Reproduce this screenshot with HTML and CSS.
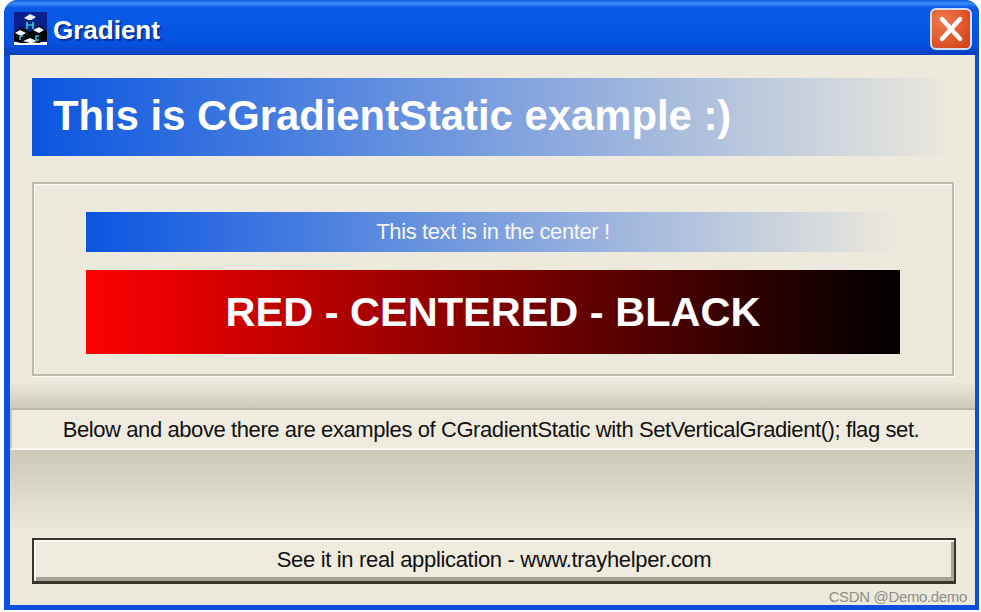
FILE: index.html
```html
<!DOCTYPE html>
<html lang="en">
<head>
<meta charset="utf-8">
<title>Gradient</title>
<link rel="stylesheet" href="styles.css">
</head>
<body>
<div class="window">
  <header class="titlebar">
    <svg class="app-icon" width="33" height="33" viewBox="0 0 33 33" aria-hidden="true">
      <rect width="33" height="33" fill="#0a1f8c"/>
      <rect x="0" y="30" width="33" height="3" fill="#fff"/>
      <path d="M10 6l6-4 6 3-6 4z" fill="#e8eefc"/>
      <path d="M11 8h10v11H11z" fill="#062a80"/>
      <path d="M0 21l7-6 9 5v11H6l-6-2z" fill="#06060a"/>
      <path d="M16 20l9-7 8 6v9l-8 3-9-1z" fill="#06060a"/>
      <path d="M1 21l5-3 6 3-5 3z" fill="#f4f7ff"/>
      <path d="M19 18l6-3 5 3-5 3z" fill="#f4f7ff"/>
      <path d="M9 29l7-3 7 3-7 2z" fill="#f4f7ff"/>
      <path d="M13 10v7M19 10v7M13 13h6" stroke="#38c8e8" stroke-width="1.6" fill="none"/>
      <path d="M6 24v4M6 24h3M25 24h-3v4h3" stroke="#38c8e8" stroke-width="1.4" fill="none"/>
    </svg>
    <span class="title">Gradient</span>
    <button class="close" type="button" aria-label="Close">
      <svg width="30" height="30" viewBox="0 0 30 30" aria-hidden="true"><path d="M6 5l18 20M24 5L6 25" stroke="#fff" stroke-width="4.4" stroke-linecap="round"/></svg>
    </button>
  </header>
  <main class="client">
    <div class="top-area">
      <div class="banner">This is CGradientStatic example :)</div>
      <section class="group">
        <div class="center-bar">This text is in the center !</div>
        <div class="red-bar">RED - CENTERED - BLACK</div>
      </section>
    </div>
    <div class="fade-down"></div>
    <div class="note">Below and above there are examples of CGradientStatic with SetVerticalGradient(); flag set.</div>
    <div class="fade-up"></div>
    <div class="bottom-area">
      <button class="link-button" type="button">See it in real application - www.trayhelper.com</button>
    </div>
  </main>
</div>
<div class="watermark">CSDN @Demo.demo</div>
</body>
</html>
```
FILE: styles.css
```css
html, body {
  margin: 0;
  padding: 0;
  width: 981px;
  height: 612px;
  overflow: hidden;
  background: #fff;
  font-family: "Liberation Sans", Arial, sans-serif;
}
.window {
  width: 975px;
  height: 610px;
  margin-left: 4px;
  box-sizing: border-box;
  border-radius: 14px 14px 0 0;
  background: #0a50e0;
  padding: 0 4px 5px 6px;
  display: flex;
  flex-direction: column;
}
.titlebar {
  height: 55px;
  flex: none;
  margin: 0 -4px 0 -6px;
  padding: 0 7px 0 10px;
  box-sizing: border-box;
  border-radius: 14px 14px 0 0;
  display: flex;
  align-items: center;
  background: linear-gradient(180deg, #0a5ce8 0%, #3d8cf5 6%, #0a5ae6 14%, #0557e6 45%, #0552e0 80%, #0a45c8 95%, #0a3fb8 100%);
}
.app-icon {
  flex: none;
  margin-top: 1px;
}
.title {
  margin-left: 6px;
  margin-top: 5px;
  font-size: 26px;
  font-weight: bold;
  color: #fff;
  text-shadow: 2px 2px 1px #0a2f9c;
}
.close {
  margin-left: auto;
  margin-top: 3px;
  width: 42px;
  height: 42px;
  padding: 0;
  border: 2px solid #d3dcf0;
  border-radius: 6px;
  background: radial-gradient(circle at 30% 30%, #ee7a50, #e2582c 55%, #c93c14 100%);
  display: flex;
  align-items: center;
  justify-content: center;
}
.client {
  flex: 1;
  min-height: 0;
  display: flex;
  flex-direction: column;
  background: #ede9dc;
}
.top-area {
  flex: none;
  height: 326px;
  padding: 23px 0 0 22px;
  box-sizing: border-box;
}
.banner {
  width: 922px;
  height: 78px;
  box-sizing: border-box;
  padding: 0 0 2px 21px;
  display: flex;
  align-items: center;
  font-size: 41.8px;
  font-weight: bold;
  color: #fff;
  background: linear-gradient(90deg, #0a55e0 0%, #ede9dc 100%);
}
.group {
  width: 922px;
  height: 194px;
  margin-top: 26px;
  box-sizing: border-box;
  border: 2px solid #bdbcab;
  box-shadow: inset 1px 1px 0 #fbfaf5, 1px 1px 0 #fbfaf5;
  padding: 28px 52px 0;
  display: flex;
  flex-direction: column;
  gap: 18px;
}
.center-bar {
  height: 40px;
  display: flex;
  align-items: center;
  justify-content: center;
  font-size: 22px;
  letter-spacing: -0.4px;
  color: #f6f6f6;
  background: linear-gradient(90deg, #0a55e0 0%, #ede9dc 100%);
}
.red-bar {
  height: 84px;
  display: flex;
  align-items: center;
  justify-content: center;
  font-size: 41.5px;
  font-weight: bold;
  color: #fff;
  padding-bottom: 1px;
  box-sizing: border-box;
  background: linear-gradient(90deg, #ff0000 0%, #000 100%);
}
.fade-down {
  flex: none;
  height: 27px;
  background: linear-gradient(180deg, #ede9dc 0%, #ccc8ba 100%);
}
.note {
  flex: none;
  height: 42px;
  box-sizing: border-box;
  border-top: 2px solid #b9b7a6;
  border-bottom: 2px solid #fbfaf5;
  border-left: 2px solid #c6c4b4;
  padding: 2px 5px 0 0;
  display: flex;
  align-items: center;
  justify-content: center;
  font-size: 22px;
  letter-spacing: -0.41px;
  color: #111;
  background: #efebdf;
}
.fade-up {
  flex: none;
  height: 85px;
  background: linear-gradient(180deg, #ccc8ba 0%, #ede9dc 100%);
}
.bottom-area {
  flex: 1;
  padding: 3px 0 0 22px;
}
.link-button {
  width: 924px;
  height: 46px;
  box-sizing: border-box;
  border: 2px solid #35352c;
  border-bottom-width: 3px;
  background: #efebdf;
  box-shadow: inset 2px 2px 0 #fbfaf5, inset -3px -4px 0 #a5a291;
  font-family: inherit;
  font-size: 22px;
  letter-spacing: -0.33px;
  color: #111;
  padding: 0 0 2px;
}
.watermark {
  position: absolute;
  right: 14px;
  top: 588px;
  font-size: 15px;
  line-height: 18px;
  color: #8f8f88;
  letter-spacing: -0.35px;
}
```
